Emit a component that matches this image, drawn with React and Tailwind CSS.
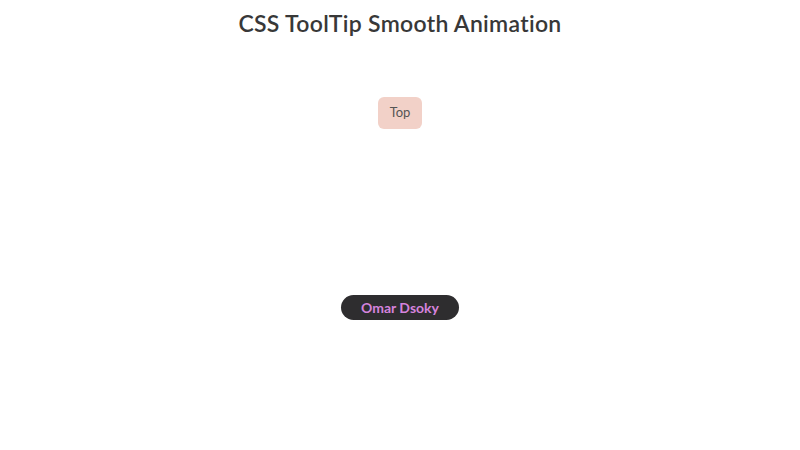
export default function App() {
  return (
    <div className="w-[800px] h-[450px] bg-white flex flex-col items-center" style={{ fontFamily: '"Lato", "Noto Sans", sans-serif' }}>
      <h1 className="mt-[9px] text-[23px] leading-[28px] font-semibold text-[#383838] tracking-[0.3px]">CSS ToolTip Smooth Animation</h1>
      <button className="mt-[60px] w-[44px] h-[32px] rounded-[6px] bg-[#f2d1c8] text-[13px] text-[#555555] flex items-center justify-center">Top</button>
      <div className="mt-[166px] w-[118px] h-[25px] rounded-full bg-[#2e2d2f] text-[#d583dc] text-[14px] font-bold flex items-center justify-center">Omar Dsoky</div>
    </div>
  );
}
